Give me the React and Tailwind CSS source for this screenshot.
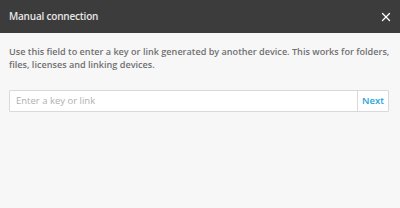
import { X } from "lucide-react";

const App = () => {
  return (
    <div
      className="w-[400px] h-[208px] flex flex-col bg-[#f7f7f8]"
      style={{ fontFamily: '"Open Sans", "Noto Sans", sans-serif' }}
    >
      {/* Header */}
      <div className="h-[33px] flex items-center justify-between bg-[#3c3c3c] pl-[9px] pr-[7px]">
        <span className="text-[10px] font-semibold text-[#e6e6e6] tracking-[-0.2px]">
          Manual connection
        </span>
        <X className="w-[14px] h-[14px] text-white" strokeWidth={2.2} />
      </div>

      {/* Body */}
      <div className="flex flex-col px-[9px] pt-[12px]">
        <p className="text-[9.1px] leading-[13px] font-semibold text-[#707070]">
          Use this field to enter a key or link generated by another device. This works for folders,
          files, licenses and linking devices.
        </p>

        <div className="mt-[19px] h-[22px] w-[380px] flex border border-[#d9d9d9] bg-white rounded-[1px]">
          <input
            className="flex-1 min-w-0 px-[6px] text-[9.5px] text-[#333] placeholder-[#b0b0b0] outline-none bg-transparent"
            placeholder="Enter a key or link"
          />
          <button className="w-[31px] border-l border-[#d9d9d9] text-[9.5px] font-semibold text-[#1ea5d8] flex items-center justify-center">
            Next
          </button>
        </div>
      </div>
    </div>
  );
};

export default App;
